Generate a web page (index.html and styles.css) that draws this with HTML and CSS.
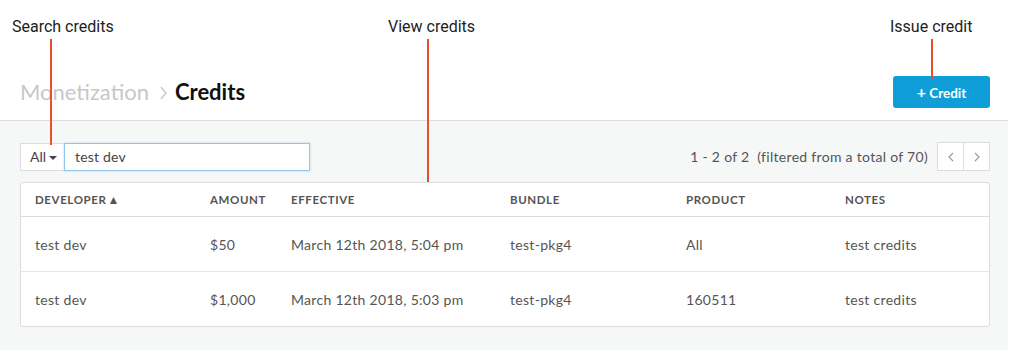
FILE: index.html
```html
<!DOCTYPE html>
<html lang="en">
<head>
    <meta charset="UTF-8">
    <title>Credits</title>
    <link rel="stylesheet" href="styles.css">
</head>
<body>
    <div class="page">
        <div class="header">
            <div class="crumbs">
                <span class="crumb-parent">Monetization</span>
                <svg class="crumb-sep" width="7" height="14" viewBox="0 0 7 14"><polyline points="1,1 6,7 1,13" fill="none" stroke="#c4c4c4" stroke-width="1.2"/></svg>
                <span class="crumb-current">Credits</span>
            </div>
            <button class="btn-credit"><span class="plus">+</span> Credit</button>
        </div>

        <div class="content">
            <div class="toolbar">
                <div class="search">
                    <div class="scope">All <span class="caret"></span></div>
                    <input class="search-input" type="text" value="test dev">
                </div>
                <div class="paging">
                    <span class="count">1 - 2 of 2 &nbsp;(filtered from a total of 70)</span>
                    <div class="pager">
                        <button class="pager-btn"><svg width="6" height="10" viewBox="0 0 6 10"><polyline points="5,1 1,5 5,9" fill="none" stroke="#999" stroke-width="1.1"/></svg></button>
                        <button class="pager-btn"><svg width="6" height="10" viewBox="0 0 6 10"><polyline points="1,1 5,5 1,9" fill="none" stroke="#999" stroke-width="1.1"/></svg></button>
                    </div>
                </div>
            </div>

            <table class="credits">
                <colgroup>
                    <col class="c-dev"><col class="c-amount"><col class="c-eff"><col class="c-bundle"><col class="c-product"><col>
                </colgroup>
                <thead>
                    <tr>
                        <th>Developer<span class="sort">&#9650;</span></th>
                        <th>Amount</th>
                        <th>Effective</th>
                        <th>Bundle</th>
                        <th>Product</th>
                        <th>Notes</th>
                    </tr>
                </thead>
                <tbody>
                    <tr>
                        <td>test dev</td>
                        <td>$50</td>
                        <td>March 12th 2018, 5:04 pm</td>
                        <td>test-pkg4</td>
                        <td>All</td>
                        <td>test credits</td>
                    </tr>
                    <tr>
                        <td>test dev</td>
                        <td>$1,000</td>
                        <td>March 12th 2018, 5:03 pm</td>
                        <td>test-pkg4</td>
                        <td>160511</td>
                        <td>test credits</td>
                    </tr>
                </tbody>
            </table>
        </div>
    </div>

    <!-- callouts drawn over the screenshot -->
    <div class="note note-search">Search credits</div>
    <div class="note note-view">View credits</div>
    <div class="note note-issue">Issue credit</div>
    <div class="pointer pointer-search"></div>
    <div class="pointer pointer-view"></div>
    <div class="pointer pointer-issue"></div>
</body>
</html>
```

FILE: styles.css
```css
body { margin: 0; background: #fff; font-family: Lato, "Open Sans", sans-serif; color: #555; }
.page { width: 1008px; }

.header { display: flex; justify-content: space-between; align-items: center; height: 121px; box-sizing: border-box; padding: 76px 18px 13px 20px; border-bottom: 1px solid #dcdcdc; }
.crumbs { display: flex; align-items: center; font-size: 22px; line-height: 32px; }
.crumb-parent { color: #c8c8c8; }
.crumb-sep { margin: 2px 8px 0 11px; }
.crumb-current { color: #111; font-weight: 700; }
.btn-credit { width: 97px; height: 32px; border: 0; border-radius: 3px; background: #0f9ed7; color: #fff; font-family: Lato, sans-serif; font-size: 13.5px; font-weight: 700; padding: 0; }
.plus { font-size: 16px; }

.content { background: #f6f7f7; padding: 21px 18px 23px 20px; }
.toolbar { display: flex; justify-content: space-between; align-items: center; margin-bottom: 11px; }
.search { display: flex; height: 28px; }
.scope { width: 44px; box-sizing: border-box; border: 1px solid #dcdcdc; border-right: 0; background: #fff; font-size: 14px; color: #444; display: flex; align-items: center; padding-left: 9px; }
.caret { display: inline-block; width: 0; height: 0; border-left: 4px solid transparent; border-right: 4px solid transparent; border-top: 4px solid #444; margin-left: 3px; margin-top: 2px; }
.search-input { width: 246px; height: 28px; box-sizing: border-box; border: 1px solid #91c5ec; box-shadow: 0 0 2px rgba(80, 160, 230, 0.4); padding: 0 10px; font-family: Lato, sans-serif; font-size: 14px; letter-spacing: 0.2px; color: #444; outline: none; }

.paging { display: flex; align-items: center; }
.count { font-size: 14px; letter-spacing: 0.3px; color: #555; margin-right: 10px; }
.pager { display: flex; }
.pager-btn { width: 27px; height: 29px; border: 1px solid #dcdcdc; background: #fff; padding: 0; margin-left: -1px; display: flex; align-items: center; justify-content: center; }

.credits { width: 970px; border-collapse: separate; border-spacing: 0; table-layout: fixed; background: #fff; border: 1px solid #dcdcdc; border-radius: 3px; }
.c-dev { width: 175px; }
.c-amount { width: 81px; }
.c-eff { width: 219px; }
.c-bundle { width: 176px; }
.c-product { width: 159px; }
.credits th { text-align: left; text-transform: uppercase; font-size: 11.5px; font-weight: 700; letter-spacing: 0.6px; color: #555; height: 33px; padding: 0 0 0 14px; border-bottom: 1px solid #dcdcdc; }
.sort { font-size: 12px; margin-left: 1px; letter-spacing: 0; }
.credits td { font-size: 14px; letter-spacing: 0.3px; color: #555; height: 54px; padding: 0 0 0 14px; border-bottom: 1px solid #e6e6e6; }
.credits tbody tr:last-child td { border-bottom: 0; }

.note { position: absolute; top: 17px; font-family: Roboto, sans-serif; font-size: 16px; color: #222; }
.note-search { left: 12px; }
.note-view { left: 388px; }
.note-issue { left: 890px; }
.pointer { position: absolute; top: 39px; width: 2px; background: #e6502c; }
.pointer-search { left: 50px; height: 106px; }
.pointer-view { left: 427px; height: 143px; }
.pointer-issue { left: 931px; height: 41px; }
```
